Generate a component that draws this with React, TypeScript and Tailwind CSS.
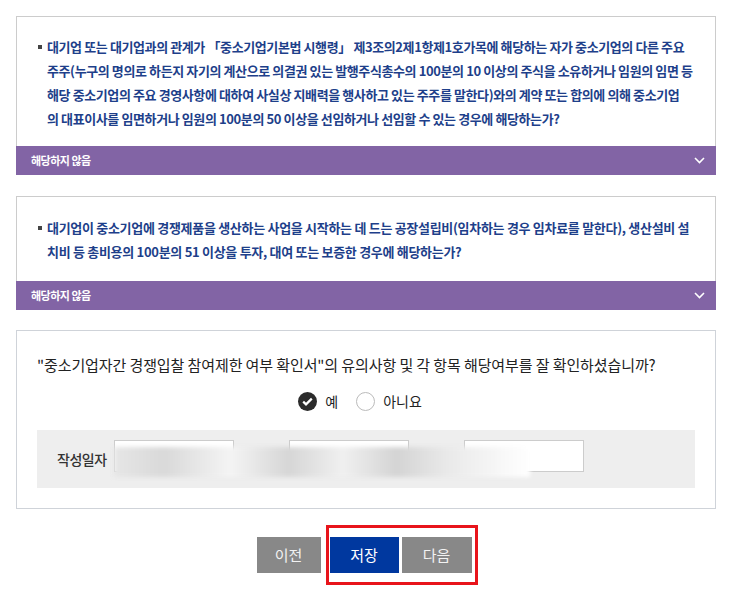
import React from "react";

const font = { fontFamily: '"Noto Sans CJK KR", "Noto Sans", sans-serif' };

function Chevron() {
  return (
    <svg width="11" height="7" viewBox="0 0 11 7" fill="none">
      <path d="M1 1l4.5 4.5L10 1" stroke="#fff" strokeWidth="1.6" />
    </svg>
  );
}

function QuestionCard({ children, pad, tracking }: { children: React.ReactNode; pad: string; tracking: string }) {
  return (
    <div className="border border-[#cccccc]">
      <div className={`flex pl-[21px] pr-[12px] ${pad}`}>
        <span className="mt-[10px] mr-[5px] h-[4px] w-[4px] shrink-0 bg-[#444]" />
        <p className={`text-[13px] font-bold leading-[24px] text-[#1e3f8a] ${tracking}`}>{children}</p>
      </div>
      <div className="flex h-[29px] items-center justify-between bg-[#8264a5] pl-[15px] pr-[11px] -mx-px -mb-px">
        <span className="text-[11px] font-bold tracking-[-0.5px] text-white">해당하지 않음</span>
        <Chevron />
      </div>
    </div>
  );
}

function DateInput() {
  return <div className="h-[32px] w-[120px] border border-[#cccccc] bg-white" />;
}

export default function App() {
  return (
    <div className="bg-white px-[16px] pt-[16px]" style={font}>
      <div className="w-[700px]">
        <QuestionCard pad="pt-[18px] pb-[15px]" tracking="tracking-[-0.4px]">
          대기업 또는 대기업과의 관계가 「중소기업기본법 시행령」 제3조의2제1항제1호가목에 해당하는 자가 중소기업의 다른 주요
          <br />
          주주(누구의 명의로 하든지 자기의 계산으로 의결권 있는 발행주식총수의 100분의 10 이상의 주식을 소유하거나 임원의 임면 등
          <br />
          해당 중소기업의 주요 경영사항에 대하여 사실상 지배력을 행사하고 있는 주주를 말한다)와의 계약 또는 합의에 의해 중소기업
          <br />
          의 대표이사를 임면하거나 임원의 100분의 50 이상을 선임하거나 선임할 수 있는 경우에 해당하는가?
        </QuestionCard>
        <div className="mt-[21px]">
          <QuestionCard pad="pt-[19px] pb-[17px]" tracking="tracking-[-0.3px]">
            대기업이 중소기업에 경쟁제품을 생산하는 사업을 시작하는 데 드는 공장설립비(임차하는 경우 임차료를 말한다), 생산설비 설
            <br />
            치비 등 총비용의 100분의 51 이상을 투자, 대여 또는 보증한 경우에 해당하는가?
          </QuestionCard>
        </div>

        <div className="mt-[20px] border border-[#cfd3d9] px-[20px] pt-[22px] pb-[20px]">
          <p className="text-[15px] leading-[24px] tracking-[-0.1px] text-[#222]">
            "중소기업자간 경쟁입찰 참여제한 여부 확인서"의 유의사항 및 각 항목 해당여부를 잘 확인하셨습니까?
          </p>
          <div className="mt-[14px] flex items-center justify-center gap-[8px] pr-[12px] text-[14px] text-[#222]">
            <span className="flex h-[19px] w-[19px] items-center justify-center rounded-full bg-[#2b2b2b]">
              <svg width="11" height="9" viewBox="0 0 11 9" fill="none">
                <path d="M1.2 4.6l2.8 2.8L9.8 1.6" stroke="#fff" strokeWidth="2.2" />
              </svg>
            </span>
            <span className="mr-[10px]">예</span>
            <span className="h-[19px] w-[19px] rounded-full border border-[#bbbbbb] bg-white" />
            <span>아니요</span>
          </div>
          <div className="relative mt-[18px] flex h-[58px] items-center bg-[#eeeeee] pl-[20px]">
            <span className="w-[57px] text-[14px] font-medium tracking-[-0.5px] text-[#333]">작성일자</span>
            <div className="-mt-[6px] flex gap-[55px]">
              <DateInput />
              <DateInput />
              <DateInput />
            </div>
            <div className="absolute left-[77px] top-[17px] h-[30px] w-[416px] bg-[linear-gradient(90deg,#e6e6e6_0%,#d9d9d9_12%,#f4f4f4_28%,#d6d6d6_42%,#f0f0f0_55%,#d4d4d4_68%,#e9e9e9_80%,#ffffff_100%)] blur-[2px]" />
          </div>
        </div>

        <div className="mt-[16px] flex items-center justify-center gap-[5px] pl-[2px]">
          <button className="h-[36px] w-[64px] bg-[#888888] text-[15px] text-[#f2f2f2]">이전</button>
          <div className="flex gap-[3px] border-[3px] border-[#e8141b] pt-[9px] pb-[9px] pl-[1px] pr-[3px]">
            <button className="h-[36px] w-[69px] bg-[#00389f] text-[15px] text-white">저장</button>
            <button className="h-[36px] w-[70px] bg-[#888888] text-[15px] text-[#f2f2f2]">다음</button>
          </div>
        </div>
      </div>
    </div>
  );
}
